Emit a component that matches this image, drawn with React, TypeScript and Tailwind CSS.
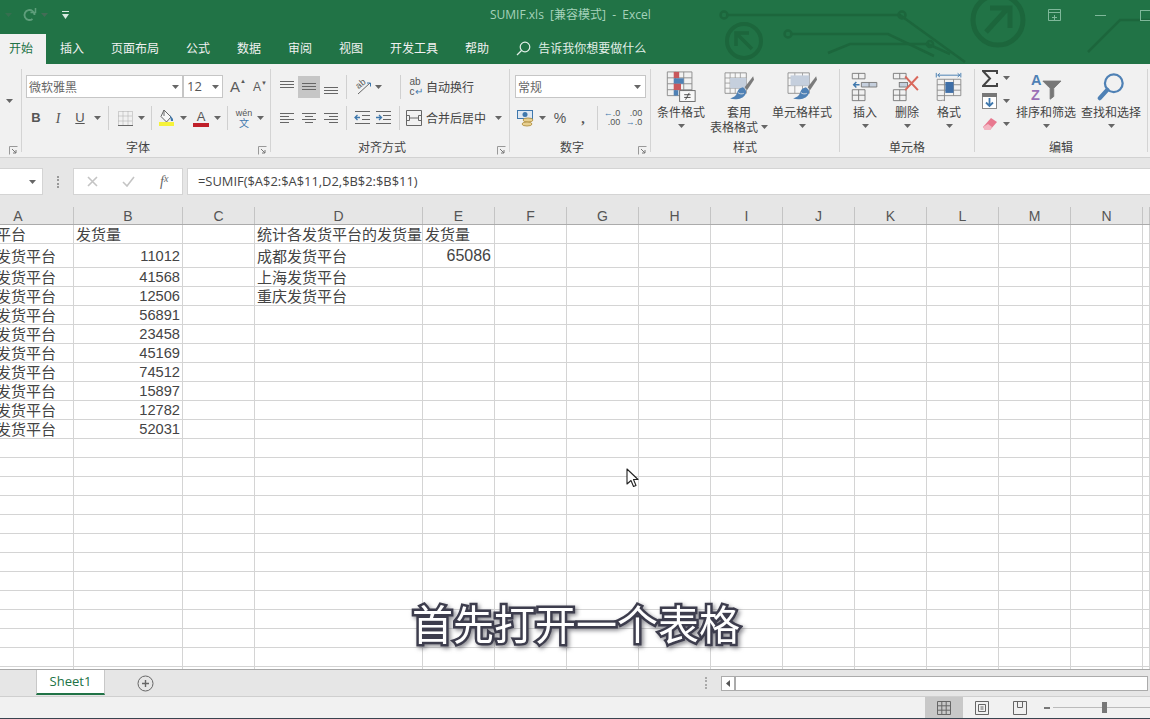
import React from "react";

const CJK = "font-['Noto_Sans_CJK_SC','Liberation_Sans',sans-serif]";

function Caret({ className = "" }: { className?: string }) {
  return (
    <svg width="7" height="4" viewBox="0 0 7 4" className={className}>
      <path d="M0 0h7L3.5 4z" fill="#666" />
    </svg>
  );
}

function CaretBox({ w = "w-[12px]" }: { w?: string }) {
  return (
    <div className={`${w} h-[22px] flex items-center justify-center shrink-0`}>
      <Caret />
    </div>
  );
}

function Sep({ m = "mx-[5px]" }: { m?: string }) {
  return <div className={`w-px h-[24px] bg-[#d0d0d0] shrink-0 ${m}`} />;
}

function Launcher() {
  return (
    <svg width="9" height="9" viewBox="0 0 9 9" className="absolute right-[3px] top-[7px]">
      <path d="M.5 8.5v-8h8" fill="none" stroke="#999" />
      <path d="M3 3l4 4M7 4v3H4" fill="none" stroke="#777" />
    </svg>
  );
}

function GroupLabel({ text, launcher }: { text: string; launcher?: boolean }) {
  return (
    <div
      className={`relative h-[16px] -mb-[3px] mt-auto flex items-center justify-center text-[12px] leading-[16px] text-[#444] ${
        launcher ? "pr-[16px]" : ""
      }`}
    >
      {text}
      {launcher && <Launcher />}
    </div>
  );
}

function Lines({ ys, x1 = [1], x2 = [15], c = "#666" }: { ys: number[]; x1?: number[]; x2?: number[]; c?: string }) {
  return (
    <svg width="16" height="16" viewBox="0 0 16 16">
      {ys.map((y, i) => (
        <path key={y} d={`M${x1[i % x1.length]} ${y + 0.5}H${x2[i % x2.length]}`} stroke={c} />
      ))}
    </svg>
  );
}

function IconBox({ children, className = "w-[22px]" }: { children: React.ReactNode; className?: string }) {
  return <div className={`h-[22px] flex items-center justify-center shrink-0 ${className}`}>{children}</div>;
}

function CondIcon() {
  return (
    <svg width="30" height="31" viewBox="0 0 32 34">
      <path d="M1 1h27v26H1zM1 7.5h27M1 14h27M1 20.500h27M10 1v26M19 1v26" fill="none" stroke="#8a8a8a" />
      <rect x="8" y="1" width="6" height="7" fill="#c8585c" />
      <rect x="8" y="8" width="11" height="6" fill="#4f81b5" />
      <rect x="8" y="14" width="8" height="7" fill="#c8585c" />
      <rect x="8" y="21" width="5" height="6" fill="#4f81b5" />
      <rect x="14.500" y="21.500" width="17" height="12" fill="#f8f8f8" stroke="#666" />
      <path d="M19.500 26h7M19.500 29h7M25 24l-4 7.500" stroke="#444" fill="none" />
    </svg>
  );
}

function Brush({ grid }: { grid: boolean }) {
  return (
    <svg width="31" height="29" viewBox="0 0 36 34">
      <path d="M1 1h25v24H1z" fill="#f6f6f6" stroke="#8a8a8a" />
      {grid ? (
        <path d="M1 7h25M1 13h25M1 19h25M7 1v24M13 1v24M19 1v24" stroke="#9a9a9a" fill="none" />
      ) : (
        <path d="M1 7h25M1 16h25M9 1v24M18 1v24" stroke="#9a9a9a" fill="none" />
      )}
      <rect x={grid ? 7 : 4} y={grid ? 7 : 4} width={grid ? 19 : 22} height={12} fill="#c5cfdd" />
      <path d="M34 5l-10 13 3 3 8-12z" fill="#7b7b7b" />
      <path d="M22 18c-5 1-6 4-7 7-1 3-4 5-8 6 6 2 15 1 18-5 2-3 0-6-3-8z" fill="#4f81b5" />
      <path d="M16 24c2 2 5 2 7 1" stroke="#e8e8e8" fill="none" />
    </svg>
  );
}

function CellGrid() {
  return <path d="M1 19.500h14v12H1zM1 25.500h14M8 19.500v12" fill="none" stroke="#777" />;
}

function InsertIcon() {
  return (
    <svg width="28" height="30" viewBox="0 0 30 33">
      <path d="M1 1.500h14v6H1zM8 1.500v6" fill="none" stroke="#777" />
      <path d="M11 11.500h17v5H11zM19.500 11.500v5" fill="#c5cfdd" stroke="#777" />
      <path d="M9 14H3M5.500 11L2.500 14l3 3" fill="none" stroke="#3f78ad" strokeWidth="1.600" />
      <CellGrid />
    </svg>
  );
}

function DeleteIcon() {
  return (
    <svg width="30" height="30" viewBox="0 0 32 33">
      <path d="M1 1.500h14v6H1zM8 1.500v6" fill="none" stroke="#777" />
      <rect x="7.500" y="11.500" width="9" height="5" fill="#c5cfdd" stroke="#777" />
      <CellGrid />
      <path d="M14 5l14 15M28 5L14 20" stroke="#d9685c" strokeWidth="2.200" fill="none" />
    </svg>
  );
}

function FormatIcon() {
  return (
    <svg width="28" height="30" viewBox="0 0 30 33">
      <path d="M1 1v5M28 1v5M3 3.500h24M5 1.500L2.500 3.500 5 5.500M24.500 1.500l2.500 2L24.500 5.500" fill="none" stroke="#3f78ad" />
      <path d="M2 8h26v18H2zM2 14h26M2 20h26M10 8v24M20 8v18M2 26v5c3 1 5 0 8 0" fill="none" stroke="#8a8a8a" />
      <rect x="11" y="11" width="9" height="12" fill="#3f6fa8" />
    </svg>
  );
}

function BigButton({ icon, lines, caretInline, width }: { icon: React.ReactNode; lines: string[]; caretInline?: boolean; width: string }) {
  return (
    <div className={`${width} shrink-0 flex flex-col items-center`}>
      <div className="h-[31px] flex items-center justify-center">{icon}</div>
      <div className="mt-[2px] text-[12px] leading-[15px] text-[#444] text-center whitespace-nowrap">
        {lines.map((l, i) => (
          <div key={l} className="flex items-center justify-center gap-[3px]">
            {l}
            {caretInline && i === lines.length - 1 && <Caret />}
          </div>
        ))}
      </div>
      {!caretInline && <Caret className="mt-[5px]" />}
    </div>
  );
}

function TitleArt() {
  return (
    <svg
      width="440"
      height="64"
      viewBox="0 0 440 64"
      className="absolute right-0 top-0"
      fill="none"
      stroke="#1c663c"
      strokeWidth="2.500"
    >
      <path d="M16 15H190L255 62" />
      <circle cx="14" cy="15" r="3.500" />
      <circle cx="192" cy="15" r="3.500" />
      <circle cx="288" cy="20" r="25" strokeWidth="5" />
      <path d="M276 32l22-24M280 8h20v20" strokeWidth="5" />
      <circle cx="34" cy="41" r="17" strokeWidth="4" />
      <path d="M42 49L27 34M26 46V33h13" strokeWidth="3.500" />
      <path d="M82 34H178L224 56" />
      <circle cx="78" cy="34" r="3.500" />
      <path d="M118 53L140 44H218L240 54" />
      <circle cx="220" cy="44" r="3" />
      <path d="M378 52L410 20H440" />
    </svg>
  );
}

function TitleBar() {
  return (
    <div className="relative h-[64px] shrink-0 bg-[#217346] flex flex-col overflow-hidden">
      <TitleArt />
      <div className="relative h-[34px] pb-[4px] flex items-center">
        <Caret className="ml-[5px] opacity-30" />
        <div className="flex items-center ml-[10px] gap-[3px] opacity-50">
          <svg width="16" height="14" viewBox="0 0 16 14" fill="none" stroke="#9cc9b0" strokeWidth="1.800">
            <path d="M12.500 7a5 5 0 1 0-2 4" />
            <path d="M8.500 4.500h5V0" strokeWidth="1.500" />
          </svg>
          <Caret />
        </div>
        <svg width="7" height="9" viewBox="0 0 7 9" className="ml-[14px]">
          <path d="M0 0h7v1H0zM0 3h7L3.500 8z" fill="#d8ebe1" />
        </svg>
        <div className="ml-[421px] text-[12px] leading-[16px] text-[#a5d2ba] whitespace-pre font-['Open_Sans','Noto_Sans_CJK_SC',sans-serif]">
          SUMIF.xls  [兼容模式]  -  Excel
        </div>
        <div className="ml-auto flex items-center h-full gap-[34px] -mr-[2px] text-[#7fb89a]">
          <svg width="13" height="12" viewBox="0 0 13 12" fill="none" stroke="currentColor">
            <path d="M.5.500h12v11H.5zM.5 3.500h12M6.500 6v5M4 8.500h5" />
          </svg>
          <div className="w-[11px] h-px bg-current" />
          <div className="w-[12px] h-[11px] border border-current" />
        </div>
      </div>
      <div className="relative h-[30px] flex items-stretch text-[12px] text-[#f1f1f1]">
        <div className="w-[46px] pl-[9px] pb-[2px] bg-[#f1f1f1] text-[#217346] flex items-center">开始</div>
        <div className="ml-[14px] pb-[2px] flex items-center gap-[27px]">
          <span>插入</span>
          <span>页面布局</span>
          <span>公式</span>
          <span>数据</span>
          <span>审阅</span>
          <span>视图</span>
          <span>开发工具</span>
          <span>帮助</span>
        </div>
        <div className="ml-[27px] pb-[2px] flex items-center gap-[7px] text-[#e2efe8]">
          <svg width="15" height="15" viewBox="0 0 15 15" fill="none" stroke="#e2efe8" strokeWidth="1.200">
            <circle cx="9" cy="6" r="4.800" />
            <path d="M5.500 9.500L1 14" />
          </svg>
          <span>告诉我你想要做什么</span>
        </div>
      </div>
    </div>
  );
}

function FontGroup() {
  return (
    <div className="relative w-[249px] shrink-0 border-r border-[#d4d4d4] flex flex-col">
      <div className="flex items-center h-[23px] mt-[6px] pl-[4px]">
        <div className="w-[157px] h-[23px] bg-white border border-[#c6c6c6] flex items-center justify-between pl-[2px] pr-[3px] text-[12px] text-[#666]">
          微软雅黑
          <Caret />
        </div>
        <div className="w-[40px] h-[23px] bg-white border border-[#c6c6c6] flex items-center justify-between pl-[3px] pr-[3px] text-[13px] text-[#555] font-['Open_Sans',sans-serif]">
          12
          <Caret />
        </div>
        <div className="ml-[7px] flex items-end gap-[8px] text-[#5a5a5a] font-['Liberation_Sans',sans-serif]">
          <span className="text-[15px] leading-[18px] relative">
            A<span className="absolute -right-[6px] top-[0px] text-[6px] leading-[6px]">▲</span>
          </span>
          <span className="text-[12px] leading-[18px] ml-[5px] relative">
            A<span className="absolute -right-[6px] top-[2px] text-[6px] leading-[6px]">▼</span>
          </span>
        </div>
      </div>
      <div className="flex items-center h-[24px] mt-[8px] pl-[3px] font-['Liberation_Serif',serif] text-[#555]">
        <IconBox><span className="font-['Liberation_Sans',sans-serif] font-bold text-[13px]">B</span></IconBox>
        <IconBox><span className="italic text-[14px]">I</span></IconBox>
        <IconBox><span className="font-['Liberation_Sans',sans-serif] text-[13px] underline">U</span></IconBox>
        <CaretBox />
        <Sep />
        <IconBox>
          <svg width="15" height="15" viewBox="0 0 15 15" fill="none" stroke="#aaa" strokeDasharray="1 1">
            <path d="M.5.500h14v14H.5zM.5 5h14M.5 10h14M5 .5v14M10 .5v14" />
            <path d="M0 14.500h15" stroke="#666" strokeDasharray="none" />
          </svg>
        </IconBox>
        <CaretBox w="w-[11px]" />
        <Sep m="mx-[4px]" />
        <IconBox>
          <svg width="18" height="18" viewBox="0 0 18 18">
            <path d="M6 1l7 7-4.500 5L3 7.500z" fill="#f7f7f7" stroke="#666" />
            <path d="M6 1v6" stroke="#666" />
            <path d="M12 6l3 4v2h-2z" fill="#3f78ad" />
            <rect x="1" y="13" width="15" height="4" fill="#f6f33a" />
          </svg>
        </IconBox>
        <CaretBox w="w-[10px]" />
        <div className="w-[2px] shrink-0" />
        <IconBox>
          <div className="flex flex-col items-center">
            <span className="font-['Liberation_Sans',sans-serif] text-[13px] leading-[13px] text-[#555]">A</span>
            <div className="w-[16px] h-[4px] bg-[#c0202a]" />
          </div>
        </IconBox>
        <CaretBox w="w-[10px]" />
        <Sep m="mx-[5px]" />
        <IconBox>
          <div className="flex flex-col items-center leading-none">
            <span className="text-[9px] leading-[10px] text-[#555] font-['Liberation_Sans',sans-serif]">wén</span>
            <span className="text-[10px] leading-[10px] text-[#3f78ad] font-['Noto_Sans_CJK_SC',sans-serif]">文</span>
          </div>
        </IconBox>
        <CaretBox w="w-[10px]" />
      </div>
      <GroupLabel text="字体" launcher />
    </div>
  );
}

function AlignGroup() {
  return (
    <div className="relative w-[239px] shrink-0 border-r border-[#d4d4d4] flex flex-col">
      <div className="flex items-center h-[23px] mt-[6px] pl-[5px]">
        <IconBox><Lines ys={[2, 5, 8]} /></IconBox>
        <IconBox className="w-[22px] bg-[#c6c6c6]"><Lines ys={[4, 7, 10]} /></IconBox>
        <IconBox><Lines ys={[8, 11, 14]} /></IconBox>
        <Sep m="mx-[4px]" />
        <IconBox className="w-[22px] ml-[2px]">
          <svg width="18" height="18" viewBox="0 0 18 18" fill="none">
            <text x="2" y="9" fontSize="9" fill="#555" fontFamily="Liberation Sans" transform="rotate(-40 6 8)">ab</text>
            <path d="M3 16L15 5" stroke="#666" />
            <path d="M12 5h3.500v3.500" stroke="#3f78ad" />
          </svg>
        </IconBox>
        <CaretBox w="w-[7px]" />
        <Sep m="ml-[18px] mr-[8px]" />
        <IconBox className="w-[14px]">
          <span className="flex flex-col items-start text-[10px] leading-[10px] text-[#555] font-['Liberation_Sans',sans-serif]">
            <span>ab</span>
            <span>c<span className="text-[#3f78ad]">↵</span></span>
          </span>
        </IconBox>
        <span className="ml-[3px] text-[12px] text-[#444]">自动换行</span>
      </div>
      <div className="flex items-center h-[24px] mt-[8px] pl-[5px]">
        <IconBox><Lines ys={[3, 6, 9, 12]} x2={[15, 10]} /></IconBox>
        <IconBox><Lines ys={[3, 6, 9, 12]} x1={[1, 4]} x2={[15, 12]} /></IconBox>
        <IconBox><Lines ys={[3, 6, 9, 12]} x1={[1, 6]} /></IconBox>
        <Sep m="mx-[4px]" />
        <IconBox>
          <svg width="16" height="14" viewBox="0 0 16 14" fill="none" stroke="#666">
            <path d="M1 .5h15M8 4.500h8M8 8.500h8M1 12.500h15" />
            <path d="M6 6.500H1M3.500 4L1 6.500 3.500 9" stroke="#3f78ad" strokeWidth="1.300" />
          </svg>
        </IconBox>
        <IconBox>
          <svg width="16" height="14" viewBox="0 0 16 14" fill="none" stroke="#666">
            <path d="M0 .5h15M7 4.500h8M7 8.500h8M0 12.500h15" />
            <path d="M0 6.500h5M3 4l2.500 2.500L3 9" stroke="#3f78ad" strokeWidth="1.300" />
          </svg>
        </IconBox>
        <Sep m="mx-[4px]" />
        <IconBox className="w-[20px]">
          <svg width="16" height="16" viewBox="0 0 16 16" fill="none" stroke="#666">
            <path d="M.5.500h15v15H.5zM.5 5.500h3M12.500 5.500h3M.5 10.500h3M12.500 10.500h3M3.500 8h9M3.500 5.500v5M12.500 5.500v5" />
          </svg>
        </IconBox>
        <span className="ml-[2px] text-[12px] text-[#444]">合并后居中</span>
        <Caret className="ml-[9px]" />
      </div>
      <GroupLabel text="对齐方式" launcher />
    </div>
  );
}

function NumberGroup() {
  return (
    <div className="relative w-[141px] shrink-0 border-r border-[#d4d4d4] flex flex-col">
      <div className="flex items-center h-[23px] mt-[6px] pl-[5px]">
        <div className="w-[131px] h-[23px] bg-white border border-[#c6c6c6] flex items-center justify-between pl-[2px] pr-[4px] text-[12px] text-[#666]">
          常规
          <Caret />
        </div>
      </div>
      <div className="flex items-center h-[24px] mt-[8px] pl-[5px] text-[#555]">
        <IconBox>
          <svg width="18" height="18" viewBox="0 0 18 18">
            <rect x=".5" y="1.500" width="15" height="8" fill="#dfe8f2" stroke="#3f78ad" />
            <circle cx="8" cy="5.500" r="2.500" fill="#3f78ad" />
            <ellipse cx="11" cy="11" rx="5" ry="2" fill="#e8cf8f" stroke="#b89a50" />
            <ellipse cx="10" cy="15" rx="5" ry="2" fill="#e8cf8f" stroke="#b89a50" />
          </svg>
        </IconBox>
        <CaretBox w="w-[10px]" />
        <IconBox className="w-[26px]"><span className="text-[14px] font-['Liberation_Sans',sans-serif]">%</span></IconBox>
        <IconBox className="w-[20px]"><span className="text-[14px] font-bold font-['Liberation_Serif',serif]">,</span></IconBox>
        <Sep m="ml-[4px] mr-[3px]" />
        <IconBox>
          <div className="flex flex-col items-end text-[9px] leading-[9px] font-['Liberation_Sans',sans-serif]">
            <span><span className="text-[#3f78ad]">←</span>.0</span>
            <span>.00</span>
          </div>
        </IconBox>
        <IconBox>
          <div className="flex flex-col items-end text-[9px] leading-[9px] font-['Liberation_Sans',sans-serif]">
            <span>.00</span>
            <span><span className="text-[#3f78ad]">→</span>.0</span>
          </div>
        </IconBox>
      </div>
      <GroupLabel text="数字" launcher />
    </div>
  );
}

function StyleGroup() {
  return (
    <div className="w-[189px] shrink-0 border-r border-[#d4d4d4] flex flex-col">
      <div className="flex pt-[2px] pl-[4px]">
        <BigButton width="w-[52px]" icon={<CondIcon />} lines={["条件格式"]} />
        <BigButton width="w-[64px]" icon={<Brush grid />} lines={["套用", "表格格式"]} caretInline />
        <BigButton width="w-[62px]" icon={<Brush grid={false} />} lines={["单元格样式"]} />
      </div>
      <GroupLabel text="样式" />
    </div>
  );
}

function CellsGroup() {
  return (
    <div className="w-[135px] shrink-0 border-r border-[#d4d4d4] flex flex-col">
      <div className="flex pt-[2px] pl-[4px]">
        <BigButton width="w-[42px]" icon={<InsertIcon />} lines={["插入"]} />
        <BigButton width="w-[42px]" icon={<DeleteIcon />} lines={["删除"]} />
        <BigButton width="w-[42px]" icon={<FormatIcon />} lines={["格式"]} />
      </div>
      <GroupLabel text="单元格" />
    </div>
  );
}

function EditGroup() {
  return (
    <div className="w-[173px] shrink-0 border-r border-[#d4d4d4] flex flex-col">
      <div className="flex pt-[2px]">
        <div className="w-[36px] pl-[7px] flex flex-col gap-[1px] -mt-[4px]">
          <div className="flex items-center h-[22px]">
            <svg width="16" height="17" viewBox="0 0 16 17">
              <path d="M15 4V1H1l7 7.500L1 16h14v-3" fill="none" stroke="#444" strokeWidth="2" />
            </svg>
            <Caret className="ml-[5px]" />
          </div>
          <div className="flex items-center h-[22px]">
            <svg width="16" height="17" viewBox="0 0 16 17">
              <rect x=".5" y=".5" width="14" height="15" fill="#fff" stroke="#888" />
              <rect x="0" y="0" width="15" height="4" fill="#777" />
              <path d="M7.500 5v8M4 9.500l3.500 3.500L11 9.500" fill="none" stroke="#3f78ad" strokeWidth="1.800" />
            </svg>
            <Caret className="ml-[5px]" />
          </div>
          <div className="flex items-center h-[22px]">
            <svg width="16" height="14" viewBox="0 0 16 14">
              <path d="M9 1l6 4-7 8H3L1 10z" fill="#e8788f" />
              <path d="M1 10l2 3h5l2-3-4-3z" fill="#f3b6c2" />
            </svg>
            <Caret className="ml-[5px]" />
          </div>
        </div>
        <BigButton
          width="w-[70px]"
          icon={
            <svg width="31" height="29" viewBox="0 0 34 32" fontFamily="Liberation Sans" fontWeight="bold">
              <text x="0" y="14" fontSize="16" fill="#4f81b5">A</text>
              <text x="0" y="31" fontSize="16" fill="#9a6fb5">Z</text>
              <path d="M13 10h20l-8 8v9l-4 3V18z" fill="#777" stroke="#777" strokeLinejoin="round" />
              <path d="M19 17v11" stroke="#eee" />
            </svg>
          }
          lines={["排序和筛选"]}
        />
        <BigButton
          width="w-[60px]"
          icon={
            <svg width="28" height="30" viewBox="0 0 30 32" fill="none">
              <circle cx="18" cy="12" r="9.500" stroke="#4f81b5" strokeWidth="2.400" />
              <path d="M11 19L3 28" stroke="#4f81b5" strokeWidth="4.500" strokeLinecap="round" />
            </svg>
          }
          lines={["查找和选择"]}
        />
      </div>
      <GroupLabel text="编辑" />
    </div>
  );
}

function Ribbon() {
  return (
    <div className="h-[94px] shrink-0 bg-[#f1f1f1] border-b border-[#d2d2d2] flex py-[5px] text-[#444]">
      <div className="w-[22px] shrink-0 border-r border-[#d4d4d4] flex flex-col">
        <Caret className="ml-[6px] mt-[30px]" />
        <GroupLabel text="" launcher />
      </div>
      <FontGroup />
      <AlignGroup />
      <NumberGroup />
      <StyleGroup />
      <CellsGroup />
      <EditGroup />
    </div>
  );
}

function FormulaBar() {
  return (
    <div className="shrink-0 bg-[#e6e6e6] h-[49px] pt-[10px] pb-[12px]">
      <div className="h-[27px] flex items-stretch">
        <div className="w-[43px] bg-white border-y border-r border-[#d4d4d4] flex items-center justify-end pr-[6px]">
          <Caret />
        </div>
        <div className="w-[30px] flex items-center justify-center">
          <div className="w-[2px] h-[12px] border-l-2 border-dotted border-[#999]" />
        </div>
        <div className="w-[110px] bg-white border border-[#d4d4d4] flex items-center text-[#bbb]">
          <span className="w-[37px] flex justify-center">
            <svg width="11" height="11" viewBox="0 0 11 11" stroke="#c4c4c4" strokeWidth="1.600" fill="none">
              <path d="M1 1l9 9M10 1l-9 9" />
            </svg>
          </span>
          <span className="w-[36px] flex justify-center">
            <svg width="13" height="11" viewBox="0 0 13 11" stroke="#c4c4c4" strokeWidth="1.600" fill="none">
              <path d="M1 6l4 4 7-9" />
            </svg>
          </span>
          <span className="w-[36px] flex justify-center text-[14px] italic text-[#666] font-['Liberation_Serif',serif]">
            f<span className="text-[10px]">x</span>
          </span>
        </div>
        <div className="ml-[4px] flex-1 bg-white border-y border-l border-[#d4d4d4] pl-[10px] flex items-center text-[12.900px] text-[#444] font-['Open_Sans',sans-serif]">
          =SUMIF($A$2:$A$11,D2,$B$2:$B$11)
        </div>
      </div>
    </div>
  );
}

const COLS = ["A", "B", "C", "D", "E", "F", "G", "H", "I", "J", "K", "L", "M", "N", ""];

const AMOUNTS = ["11012", "41568", "12506", "56891", "23458", "45169", "74512", "15897", "12782", "52031"];

const D_COL: Record<number, string> = {
  0: "统计各发货平台的发货量",
  1: "成都发货平台",
  2: "上海发货平台",
  3: "重庆发货平台",
};

function cellText(r: number, c: number): React.ReactNode {
  if (c === 0) {
    if (r === 0) return <span className="shrink-0 whitespace-nowrap pr-[47px]">平台</span>;
    if (r <= 10) return <span className="shrink-0 whitespace-nowrap pr-[17px]">发货平台</span>;
  }
  if (c === 1) {
    if (r === 0) return <span className="pl-[2px]">发货量</span>;
    if (r <= 10) return <span className="ml-auto pr-[2px] text-[14.670px] font-['Liberation_Sans',sans-serif]">{AMOUNTS[r - 1]}</span>;
  }
  if (c === 3 && D_COL[r]) return <span className="pl-[2px] whitespace-nowrap">{D_COL[r]}</span>;
  if (c === 4) {
    if (r === 0) return <span className="pl-[2px] whitespace-nowrap">发货量</span>;
    if (r === 1) return <span className="ml-auto pr-[3px] text-[16px] font-['Liberation_Sans',sans-serif]">65086</span>;
  }
  return null;
}

function Sheet() {
  const rows = Array.from({ length: 24 }, (_, i) => i);
  return (
    <div className="relative flex-1 min-h-0 flex flex-col overflow-hidden bg-white">
      <div className="h-[18px] shrink-0 grid grid-cols-[74px_109px_72px_168px_repeat(10,72px)_1fr] bg-[#e6e6e6] border-b border-[#ababab] text-[14px] leading-[16px] text-[#555] font-['Liberation_Sans',sans-serif]">
        {COLS.map((c, i) => (
          <div key={i} className={`border-r border-[#c4c4c4] flex items-center justify-center ${i === 0 ? "pr-[37px]" : ""}`}>
            {c}
          </div>
        ))}
      </div>
      <div className="flex-1 min-h-0 overflow-hidden grid grid-cols-[74px_109px_72px_168px_repeat(10,72px)_1fr] grid-rows-[19px_24px] auto-rows-[19px] text-[15px] leading-[18px] text-[#444]">
        {rows.flatMap((r) =>
          COLS.map((_, c) => (
            <div
              key={`${r}-${c}`}
              className={`border-r border-b border-[#d4d4d4] flex items-center overflow-hidden ${c === 0 ? "justify-end" : ""}`}
            >
              {cellText(r, c)}
            </div>
          )),
        )}
      </div>
      <div className="absolute left-[412px] top-[390px] text-[41px] leading-[50px] text-white whitespace-nowrap [-webkit-text-stroke:5px_#3d3d4d] [paint-order:stroke_fill] drop-shadow-[2px_2px_2px_rgba(60,60,70,0.6)]">
        首先打开一个表格
      </div>
      <svg width="13" height="20" viewBox="0 0 13 20" className="absolute left-[626px] top-[261px]">
        <path d="M1 1v15l4-3.500 2.500 6 2.500-1-2.500-6H12z" fill="#fff" stroke="#222" strokeWidth="1.100" strokeLinejoin="round" />
      </svg>
    </div>
  );
}

function SheetTabs() {
  return (
    <div className="h-[28px] shrink-0 bg-[#e6e6e6] border-y border-t-[#a8a8a8] border-b-[#cfcfcf] flex items-center">
      <div className="ml-[36px] w-[69px] h-[25px] self-start bg-white border-x border-[#c8c8c8] border-b-2 border-b-[#217346] flex items-center justify-center text-[13px] text-[#217346] font-['Open_Sans',sans-serif]">
        Sheet1
      </div>
      <svg width="17" height="17" viewBox="0 0 17 17" className="ml-[32px]" fill="none" stroke="#666">
        <circle cx="8.500" cy="8.500" r="7.500" />
        <path d="M8.500 5v7M5 8.500h7" strokeWidth="1.400" />
      </svg>
      <div className="ml-auto flex items-center">
        <div className="w-[2px] h-[12px] border-l-2 border-dotted border-[#aaa] mr-[14px]" />
        <div className="w-[427px] h-[15px] bg-white border border-[#ababab] flex items-stretch mr-[2px]">
          <div className="w-[14px] border-r-2 border-[#ababab] flex items-center justify-center">
            <svg width="4" height="7" viewBox="0 0 4 7">
              <path d="M4 0v7L0 3.500z" fill="#555" />
            </svg>
          </div>
        </div>
      </div>
    </div>
  );
}

function StatusBar() {
  return (
    <div className="h-[22px] shrink-0 bg-[#f1f1f1] border-b border-[#3a4450] flex items-stretch justify-end overflow-hidden">
      <div className="w-[38px] bg-[#c8c8c8] flex items-center justify-center">
        <svg width="14" height="14" viewBox="0 0 14 14" fill="none" stroke="#666">
          <path d="M.5.500h13v13H.5zM.5 4.800h13M.5 9.200h13M4.800.5v13M9.200.5v13" />
        </svg>
      </div>
      <div className="w-[38px] flex items-center justify-center">
        <svg width="14" height="14" viewBox="0 0 14 14" fill="none" stroke="#666">
          <path d="M.5.500h13v13H.5zM3.500 3.500h7v7h-7zM5.500 6h3M5.500 8h3" />
        </svg>
      </div>
      <div className="w-[38px] flex items-center justify-center">
        <svg width="14" height="14" viewBox="0 0 14 14" fill="none" stroke="#666">
          <path d="M.5.500h13v13H.5zM4.500.5v6h5v-6" />
        </svg>
      </div>
      <div className="w-[14px] pl-[5px] flex items-center">
        <div className="w-[6px] h-[2px] bg-[#777]" />
      </div>
      <div className="w-[97px] relative flex items-center">
        <div className="absolute left-0 right-0 h-px bg-[#bbb]" />
        <div className="absolute left-[49px] w-[5px] h-[11px] bg-[#777]" />
      </div>
    </div>
  );
}

export default function App() {
  return (
    <div className={`w-[1150px] h-[719px] overflow-hidden flex flex-col bg-white ${CJK}`}>
      <TitleBar />
      <Ribbon />
      <FormulaBar />
      <Sheet />
      <SheetTabs />
      <StatusBar />
    </div>
  );
}
